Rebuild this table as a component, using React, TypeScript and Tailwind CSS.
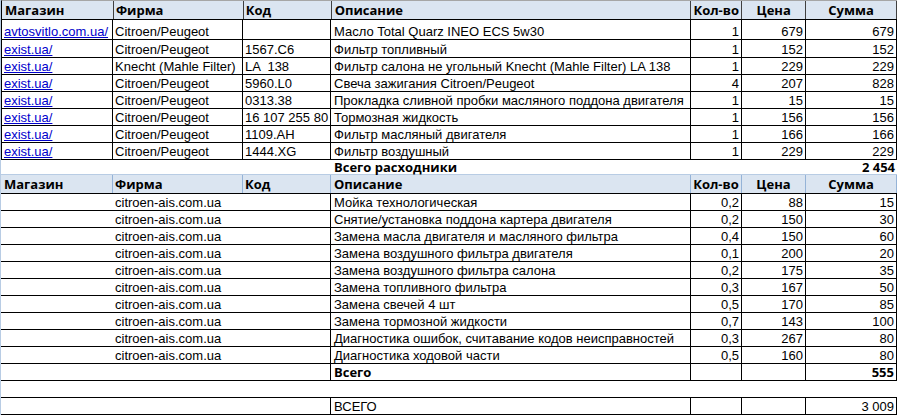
import React from 'react';

const parts = [
  { shop: 'avtosvitlo.com.ua/', firm: 'Citroen/Peugeot', code: '', desc: 'Масло Total Quarz INEO ECS 5w30', qty: '1', price: '679', sum: '679', h: 'h-[20px]' },
  { shop: 'exist.ua/', firm: 'Citroen/Peugeot', code: '1567.C6', desc: 'Фильтр топливный', qty: '1', price: '152', sum: '152', h: 'h-[18px]' },
  { shop: 'exist.ua/', firm: 'Knecht (Mahle Filter)', code: 'LA  138', desc: 'Фильтр салона не угольный Knecht (Mahle Filter) LA 138', qty: '1', price: '229', sum: '229', h: 'h-[17px]' },
  { shop: 'exist.ua/', firm: 'Citroen/Peugeot', code: '5960.L0', desc: 'Свеча зажигания Citroen/Peugeot', qty: '4', price: '207', sum: '828', h: 'h-[17px]' },
  { shop: 'exist.ua/', firm: 'Citroen/Peugeot', code: '0313.38', desc: 'Прокладка сливной пробки масляного поддона двигателя', qty: '1', price: '15', sum: '15', h: 'h-[17px]' },
  { shop: 'exist.ua/', firm: 'Citroen/Peugeot', code: '16 107 255 80', desc: 'Тормозная жидкость', qty: '1', price: '156', sum: '156', h: 'h-[17px]' },
  { shop: 'exist.ua/', firm: 'Citroen/Peugeot', code: '1109.AH', desc: 'Фильтр масляный двигателя', qty: '1', price: '166', sum: '166', h: 'h-[17px]' },
  { shop: 'exist.ua/', firm: 'Citroen/Peugeot', code: '1444.XG', desc: 'Фильтр воздушный', qty: '1', price: '229', sum: '229', h: 'h-[17px]' },
];

const works = [
  { desc: 'Мойка технологическая', qty: '0,2', price: '88', sum: '15' },
  { desc: 'Снятие/установка поддона картера двигателя', qty: '0,2', price: '150', sum: '30' },
  { desc: 'Замена масла двигателя и масляного фильтра', qty: '0,4', price: '150', sum: '60' },
  { desc: 'Замена воздушного фильтра двигателя', qty: '0,1', price: '200', sum: '20' },
  { desc: 'Замена воздушного фильтра салона', qty: '0,2', price: '175', sum: '35' },
  { desc: 'Замена топливного фильтра', qty: '0,3', price: '167', sum: '50' },
  { desc: 'Замена свечей 4 шт', qty: '0,5', price: '170', sum: '85' },
  { desc: 'Замена тормозной жидкости', qty: '0,7', price: '143', sum: '100' },
  { desc: 'Диагностика ошибок, считавание кодов неисправностей', qty: '0,3', price: '267', sum: '80' },
  { desc: 'Диагностика ходовой части', qty: '0,5', price: '160', sum: '80' },
];

const bold = "font-['Open_Sans',sans-serif] font-bold text-[13px] leading-[16px]";
const cell = 'flex items-end px-[2px] overflow-hidden whitespace-nowrap leading-[15px]';

function Header({ top, sep }: { top: string; sep: string }) {
  return (
    <div className={`flex w-[896px] h-[20px] bg-[#dbe5f1] border-b border-black ${top} ${bold}`}>
      <div className={`w-[112px] flex items-center px-[3px] border-r ${sep}`}>Магазин</div>
      <div className={`w-[130px] flex items-center px-[2px] border-r ${sep}`}>Фирма</div>
      <div className={`w-[88px] flex items-center px-[2px] border-r ${sep}`}>Код</div>
      <div className={`w-[360px] flex items-center px-[3px] border-r ${sep}`}>Описание</div>
      <div className={`w-[51px] flex items-center justify-center border-r ${sep}`}>Кол-во</div>
      <div className={`w-[64px] flex items-center justify-center border-r ${sep}`}>Цена</div>
      <div className={`w-[91px] flex items-center justify-center border-r ${sep}`}>Сумма</div>
    </div>
  );
}

export default function App() {
  return (
    <div className="w-[899px] h-[416px] bg-white overflow-hidden">
      <div className="border-l border-[#b8cce4] font-['Liberation_Sans',Arial,sans-serif] text-[13px] text-black">
        <Header top="border-t border-t-[#a6a6a6] border-l border-l-black" sep="border-[#404040]" />

        {parts.map((p, i) => (
          <div key={i} className={`flex w-[896px] ${p.h} border-b border-black`}>
            <div className={`${cell} w-[112px] border-l border-r border-black`}>
              <span className="text-[#0000cc] underline">{p.shop}</span>
            </div>
            <div className={`${cell} w-[130px] border-r border-black`}>{p.firm}</div>
            <div className={`${cell} w-[88px] border-r border-black whitespace-pre`}>{p.code}</div>
            <div className={`${cell} w-[360px] border-r border-black px-[3px]`}>{p.desc}</div>
            <div className={`${cell} w-[51px] justify-end border-r border-black`}>{p.qty}</div>
            <div className={`${cell} w-[64px] justify-end border-r border-black`}>{p.price}</div>
            <div className={`${cell} w-[91px] justify-end border-r border-black`}>{p.sum}</div>
          </div>
        ))}

        {/* итог по расходникам */}
        <div className={`flex w-[896px] h-[14px] ${bold}`}>
          <div className="w-[330px]" />
          <div className="w-[360px] flex items-end px-[3px] leading-[14px]">Всего расходники</div>
          <div className="w-[115px]" />
          <div className="w-[91px] flex items-end justify-end px-[2px] leading-[14px]">2 454</div>
        </div>

        <Header top="border-t border-t-[#b8cce4]" sep="border-[#95b3d7]" />

        {works.map((w, i) => (
          <div key={i} className="flex w-[896px] h-[17px] border-b border-black">
            <div className="w-[112px]" />
            <div className={`${cell} w-[218px] border-r border-black`}>citroen-ais.com.ua</div>
            <div className={`${cell} w-[360px] border-r border-black px-[3px]`}>{w.desc}</div>
            <div className={`${cell} w-[51px] justify-end border-r border-black`}>{w.qty}</div>
            <div className={`${cell} w-[64px] justify-end border-r border-black`}>{w.price}</div>
            <div className={`${cell} w-[91px] justify-end border-r border-black`}>{w.sum}</div>
          </div>
        ))}

        <div className={`flex w-[896px] h-[17px] border-b border-black ${bold}`}>
          <div className="w-[330px] border-r border-black" />
          <div className="w-[360px] flex items-end px-[3px] border-r border-black leading-[15px]">Всего</div>
          <div className="w-[51px] border-r border-black" />
          <div className="w-[64px] border-r border-black" />
          <div className="w-[91px] flex items-end justify-end px-[2px] border-r border-black leading-[15px]">555</div>
        </div>

        <div className="w-[896px] h-[17px] border-b border-black" />

        <div className="flex w-[896px] h-[17px] border-b border-black">
          <div className="w-[330px] border-r border-black" />
          <div className={`${cell} w-[360px] border-r border-black px-[3px]`}>ВСЕГО</div>
          <div className="w-[51px] border-r border-black" />
          <div className="w-[64px] border-r border-black" />
          <div className={`${cell} w-[91px] justify-end border-r border-black`}>3 009</div>
        </div>
      </div>
    </div>
  );
}
